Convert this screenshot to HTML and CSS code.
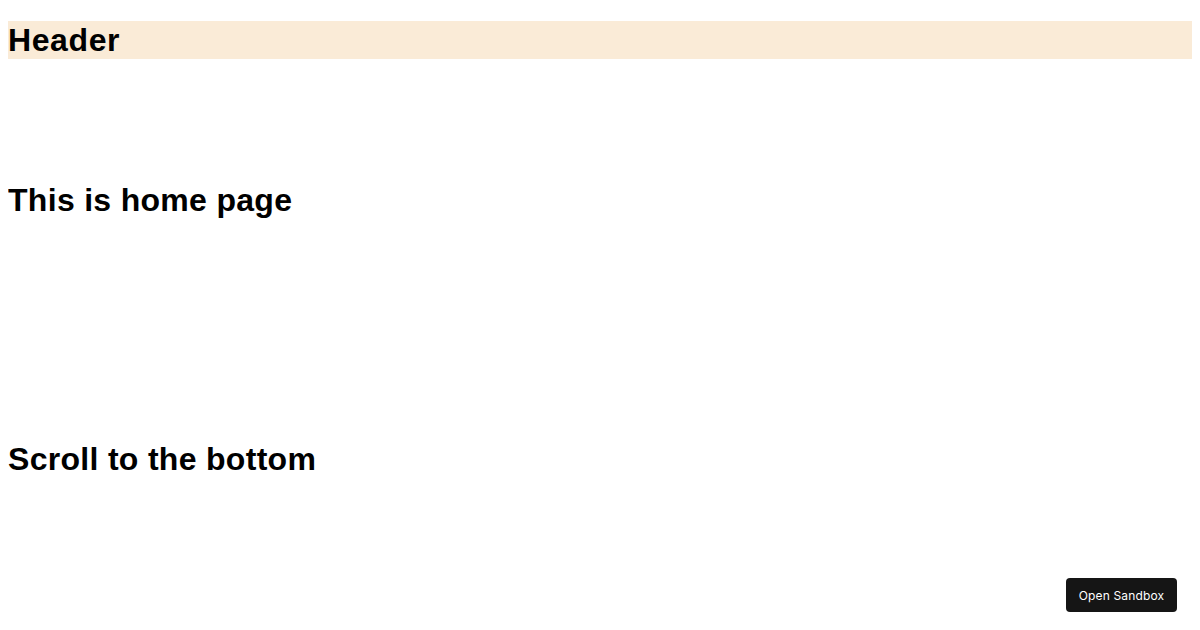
FILE: index.html
```html
<!DOCTYPE html>
<html>
<head>
<meta charset="utf-8">
<link rel="stylesheet" href="styles.css">
</head>
<body>
<div class="header"><h1 class="title">Header</h1></div>
<main class="page">
<h1 class="home">This is home page</h1>
<h1 class="scroll">Scroll to the bottom</h1>
</main>
<a class="sandbox-btn">Open Sandbox</a>
</body>
</html>
```
FILE: styles.css
```css
html, body { margin: 0; padding: 0; }
body {
  margin: 0 8px 8px;
  font-family: "Liberation Sans", Arial, sans-serif;
  color: #000;
  background: #fff;
}
.header { background: #faebd7; margin-top: 21px; }
.title { margin: 0; font-size: 32px; font-weight: bold; line-height: 38px; letter-spacing: 0.6px; }
.page { display: block; }
.home { margin: 122px 0 0; font-size: 32px; line-height: 38px; letter-spacing: 0.3px; }
.scroll { margin: 221px 0 0; font-size: 32px; line-height: 38px; letter-spacing: 0.3px; }
.sandbox-btn {
  position: fixed;
  right: 23px;
  bottom: 18px;
  width: 111px;
  height: 34px;
  box-sizing: border-box;
  display: flex;
  align-items: center;
  justify-content: center;
  background: #151515;
  color: #fff;
  border-radius: 4px;
  font-family: Inter, "Noto Sans", sans-serif;
  font-size: 12px;
  letter-spacing: 0.15px;
  text-decoration: none;
}
```
